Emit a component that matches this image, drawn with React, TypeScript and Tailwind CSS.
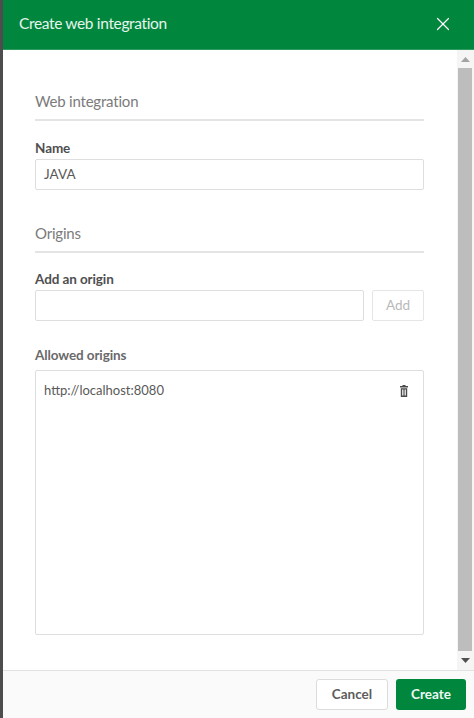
import { X } from "lucide-react";

const font = "font-['Lato','Noto_Sans',sans-serif]";

function SectionTitle({ children }: { children: React.ReactNode }) {
  return (
    <div className="h-[30px] border-b-2 border-[#e4e4e4] text-[15px] leading-[20px] tracking-[-0.2px] text-[#7b7b7b]">
      {children}
    </div>
  );
}

function Label({ children }: { children: React.ReactNode }) {
  return <div className="h-[19px] text-[13.5px] font-bold leading-[17px] tracking-[-0.1px] text-[#4f4f4f]">{children}</div>;
}

export default function App() {
  return (
    <div className={`flex h-[718px] w-[474px] overflow-hidden bg-white ${font}`}>
      <div className="w-[3px] shrink-0 bg-[#4d4d4d]" />
      <div className="flex min-w-0 flex-1 flex-col">
        {/* Header */}
        <div className="flex h-[50px] shrink-0 items-center justify-between border-b border-[#2f9a5e] bg-[#00873d] pb-[2px] pl-4 pr-[20px]">
          <h1 className="text-[15.5px] leading-none tracking-[-0.35px] text-[#e6f4ec]">Create web integration</h1>
          <X className="h-[22px] w-[22px] text-white" strokeWidth={1.3} />
        </div>

        <div className="flex min-h-0 flex-1">
          {/* Form */}
          <div className="flex-1 pl-8 pr-[33px] pt-[41px]">
            <SectionTitle>Web integration</SectionTitle>
            <div className="mt-[19px]">
              <Label>Name</Label>
              <div className="flex h-[31px] items-center rounded-[2px] border border-[#dedede] px-2 text-[13.5px] text-[#595959]">
                JAVA
              </div>
            </div>

            <div className="mt-[33px]">
              <SectionTitle>Origins</SectionTitle>
            </div>
            <div className="mt-[18px]">
              <Label>Add an origin</Label>
              <div className="flex gap-2">
                <div className="h-[31px] flex-1 rounded-[2px] border border-[#dedede]" />
                <button className="h-[31px] w-[52px] rounded-[2px] border border-[#e6e6e6] text-[13.5px] text-[#b9b9b9]">
                  Add
                </button>
              </div>
            </div>

            <div className="mt-[26px]">
              <div className="h-[15px] text-[13.5px] font-bold leading-[17px] tracking-[-0.1px] text-[#6a6a6a]">Allowed origins</div>
              <div className="mt-[8px] flex h-[265px] items-start justify-between rounded-[2px] border border-[#dedede] pl-2 pr-[15px] pt-[11px] text-[13px] leading-4 text-[#595959]">
                <span>http://localhost:8080</span>
                <svg className="mt-[3px] h-[12px] w-[8px]" viewBox="0 0 8 12" fill="#4a4a4a">
                  <path d="M2.5 0h3v1H8v1.5H0V1h2.5z" />
                  <path d="M.8 3.2h6.4V12H.8zM2 4.5v6h.8v-6zm1.6 0v6h.8v-6zm1.6 0v6H6v-6z" fillRule="evenodd" />
                </svg>
              </div>
            </div>
          </div>

          {/* Scrollbar */}
          <div className="flex w-[17px] shrink-0 flex-col bg-[#f5f5f5]">
            <div className="flex h-[18px] items-center justify-center">
              <svg className="h-[5px] w-[9px]" viewBox="0 0 9 5" fill="#a3a3a3"><path d="M4.5 0 9 5H0z" /></svg>
            </div>
            <div className="ml-px mr-[2px] flex-1 bg-[#bdbdbd]" />
            <div className="flex h-[19px] items-center justify-center">
              <svg className="h-[5px] w-[9px]" viewBox="0 0 9 5" fill="#505050"><path d="M0 0h9L4.5 5z" /></svg>
            </div>
          </div>
        </div>

        {/* Footer */}
        <div className="flex h-[48px] shrink-0 items-center justify-end gap-2 border-t border-[#e2e2e2] bg-[#fafafa] pr-2">
          <button className="h-[31px] w-[72px] rounded-[3px] border border-[#dcdcdc] bg-white text-[13.5px] font-bold text-[#5c5c5c]">
            Cancel
          </button>
          <button className="h-[31px] w-[70px] rounded-[3px] bg-[#00873d] text-[13.5px] font-bold text-[#eef8f2]">
            Create
          </button>
        </div>
      </div>
    </div>
  );
}
